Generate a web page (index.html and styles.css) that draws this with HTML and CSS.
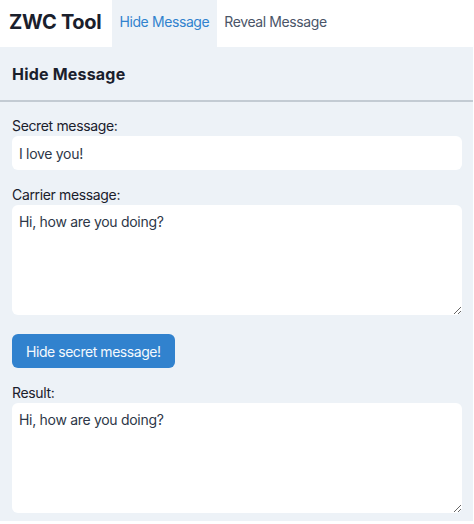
FILE: index.html
```html
<!DOCTYPE html>
<html lang="en">
<head>
<meta charset="utf-8">
<title>ZWC Tool</title>
<link rel="stylesheet" href="styles.css">
</head>
<body>
<header class="topbar">
  <h1 class="brand">ZWC Tool</h1>
  <nav class="tabs">
    <a class="tab tab-active">Hide Message</a>
    <a class="tab">Reveal Message</a>
  </nav>
</header>
<main class="panel">
  <div class="panel-head">Hide Message</div>
  <form class="panel-body">
    <label class="field-label" for="secret">Secret message:</label>
    <input id="secret" class="text-input" type="text" value="I love you!">
    <label class="field-label gap" for="carrier">Carrier message:</label>
    <textarea id="carrier" class="text-area">Hi, how are you doing?</textarea>
    <div class="actions">
      <button type="button" class="btn">Hide secret message!</button>
    </div>
    <label class="field-label gap" for="result">Result:</label>
    <textarea id="result" class="text-area">Hi, how are you doing?</textarea>
  </form>
</main>
</body>
</html>
```
FILE: styles.css
```css
* { box-sizing: border-box; }
body {
  margin: 0;
  font-family: Inter, "Noto Sans", sans-serif;
  color: #1a202c;
  background: #fff;
}
.topbar {
  display: flex;
  align-items: stretch;
  height: 47px;
}
.brand {
  margin: 0;
  padding: 0 11px 0 9px;
  font-size: 20px;
  font-weight: 700;
  line-height: 44px;
  letter-spacing: -0.3px;
  color: #1a202c;
}
.tabs {
  display: flex;
}
.tab {
  padding: 0 8px 0 7px;
  font-size: 14px;
  line-height: 44px;
  letter-spacing: -0.4px;
  color: #4a5568;
}
.tab-active {
  background: #edf2f7;
  color: #3182ce;
}
.panel {
  background: #edf2f7;
  margin-right: 1px;
}
.panel-head {
  height: 55px;
  padding: 0 12px;
  display: flex;
  align-items: center;
  font-size: 16px;
  font-weight: 700;
  letter-spacing: 0.2px;
  border-bottom: 2px solid #c3cbd3;
}
.panel-body {
  margin: 0;
  padding: 14px 11px 8px 12px;
  display: flex;
  flex-direction: column;
}
.field-label {
  font-size: 14px;
  line-height: 20px;
  letter-spacing: -0.35px;
  color: #1a202c;
}
.gap { margin-top: 15px; }
.text-input, .text-area {
  font-family: inherit;
  font-size: 14px;
  line-height: 20px;
  letter-spacing: -0.3px;
  color: #2d3748;
  background: #fff;
  border: none;
  border-radius: 6px;
  padding: 7px 7px;
  width: 100%;
  outline: none;
}
.text-input { height: 34px; }
.text-area { height: 110px; resize: vertical; display: block; }
.actions { margin-top: 19px; display: flex; }
.btn {
  font-family: inherit;
  font-size: 14px;
  letter-spacing: -0.45px;
  height: 34px;
  padding: 0 14px;
  border: none;
  border-radius: 6px;
  background: #3182ce;
  color: #f4f9fd;
}
```
